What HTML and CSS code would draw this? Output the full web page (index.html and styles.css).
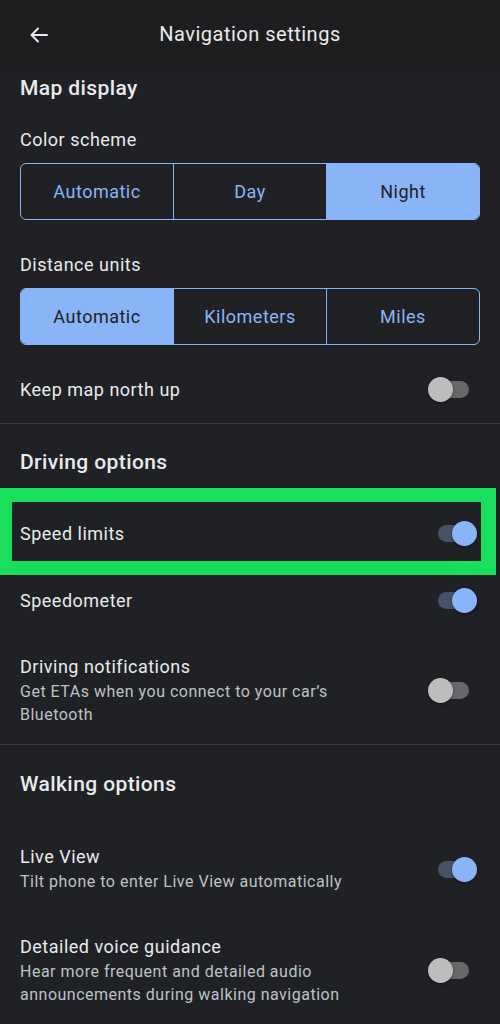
FILE: index.html
```html
<!DOCTYPE html>
<html lang="en">
<head>
    <meta charset="UTF-8">
    <meta name="viewport" content="width=device-width, initial-scale=1.0">
    <title>Navigation settings</title>
    <link rel="stylesheet" href="styles.css">
</head>
<body>
    <div class="top-bar">
        <svg class="back" width="24" height="24" viewBox="0 0 24 24">
            <path d="M20 12H4.5M11 5.5L4.5 12l6.5 6.5" fill="none" stroke="#e8eaed" stroke-width="2" stroke-linecap="round" stroke-linejoin="round"/>
        </svg>
        <span class="title">Navigation settings</span>
    </div>

    <div class="content">
        <div class="section-title first">Map display</div>

        <div class="label">Color scheme</div>
        <div class="segmented">
            <div class="seg">Automatic</div>
            <div class="seg">Day</div>
            <div class="seg on">Night</div>
        </div>

        <div class="label">Distance units</div>
        <div class="segmented">
            <div class="seg on">Automatic</div>
            <div class="seg">Kilometers</div>
            <div class="seg">Miles</div>
        </div>

        <div class="row first-row">
            <div class="text"><div class="name">Keep map north up</div></div>
            <div class="switch"><div class="track"></div><div class="thumb"></div></div>
        </div>
    </div>

    <div class="divider"></div>

    <div class="content">
        <div class="section-title">Driving options</div>

        <div class="row marked">
            <div class="text"><div class="name">Speed limits</div></div>
            <div class="switch checked"><div class="track"></div><div class="thumb"></div></div>
        </div>

        <div class="row">
            <div class="text"><div class="name">Speedometer</div></div>
            <div class="switch checked"><div class="track"></div><div class="thumb"></div></div>
        </div>

        <div class="row last">
            <div class="text">
                <div class="name">Driving notifications</div>
                <div class="sub">Get ETAs when you connect to your car’s Bluetooth</div>
            </div>
            <div class="switch"><div class="track"></div><div class="thumb"></div></div>
        </div>
    </div>

    <div class="divider"></div>

    <div class="content walking">
        <div class="section-title">Walking options</div>

        <div class="row">
            <div class="text">
                <div class="name">Live View</div>
                <div class="sub">Tilt phone to enter Live View automatically</div>
            </div>
            <div class="switch checked"><div class="track"></div><div class="thumb"></div></div>
        </div>

        <div class="row">
            <div class="text">
                <div class="name">Detailed voice guidance</div>
                <div class="sub">Hear more frequent and detailed audio announcements during walking navigation</div>
            </div>
            <div class="switch"><div class="track"></div><div class="thumb"></div></div>
        </div>
    </div>
</body>
</html>
```

FILE: styles.css
```css
html {
    font-family: Roboto, "Liberation Sans", sans-serif;
    letter-spacing: 0.5px;
}

body {
    margin: 0;
    background-color: #202124;
    color: #e8eaed;
    height: 1024px;
    overflow: hidden;
}

.top-bar {
    height: 68px;
    display: flex;
    align-items: center;
    justify-content: center;
    position: relative;
    background-color: #1e1e20;
    box-shadow: 0 1px 4px rgba(0, 0, 0, 0.25);
}

.back {
    position: absolute;
    left: 27px;
    top: 23px;
}

.title {
    font-size: 20px;
    padding-bottom: 1px;
}

.content {
    padding: 0 20px;
}

.section-title {
    font-size: 21px;
    font-weight: 500;
    line-height: 28px;
    letter-spacing: 0.4px;
    padding-top: 24px;
    margin-bottom: 24px;
}

.section-title.first {
    padding-top: 6px;
    margin-bottom: 0;
}

.walking .section-title {
    padding-top: 25px;
    margin-bottom: 26px;
}

.label {
    font-size: 18px;
    line-height: 24px;
    margin-top: 26px;
}

.label + .segmented {
    margin-top: 11px;
}

.segmented + .label {
    margin-top: 33px;
}

.segmented {
    display: flex;
    height: 57px;
    border: 1.5px solid #8ab4f8;
    border-radius: 6px;
    overflow: hidden;
    box-sizing: border-box;
}

.seg {
    flex: 1;
    display: flex;
    align-items: center;
    justify-content: center;
    font-size: 18px;
    color: #8ab4f8;
    border-left: 1.5px solid #8ab4f8;
}

.seg:first-child {
    border-left: none;
}

.seg.on {
    background-color: #8ab4f8;
    color: #202124;
}

.row {
    display: flex;
    align-items: center;
    padding: 21px 0;
    position: relative;
}

.row.first-row {
    margin-top: 11px;
}

.row.last {
    padding-bottom: 18px;
}

.text {
    flex: 1;
    padding-right: 60px;
}

.name {
    font-size: 18px;
    line-height: 24px;
}

.sub {
    font-size: 16px;
    line-height: 23px;
    margin-top: 1px;
    color: #bdc1c6;
}

.switch {
    position: relative;
    width: 50px;
    height: 25px;
    margin-right: 2px;
    flex-shrink: 0;
}

.track {
    position: absolute;
    left: 6px;
    top: 4px;
    width: 35px;
    height: 17px;
    border-radius: 9px;
    background-color: #68686b;
}

.thumb {
    position: absolute;
    left: 0;
    top: 0;
    width: 25px;
    height: 25px;
    border-radius: 50%;
    background-color: #bdbdbd;
    box-shadow: 0 1px 3px rgba(0, 0, 0, 0.4);
}

.switch.checked .track {
    left: 10px;
    background-color: #475268;
}

.switch.checked .thumb {
    left: 24px;
    background-color: #8ab4f8;
}

.divider {
    height: 1px;
    background-color: #3c3c3f;
}

/* green highlight box drawn over the speed limits row */
.row.marked::after {
    content: "";
    position: absolute;
    left: -20px;
    right: -16px;
    top: -12px;
    bottom: -8px;
    border: 14px solid #19df5d;
    border-left-width: 12px;
    border-right-width: 15px;
    pointer-events: none;
}
```
